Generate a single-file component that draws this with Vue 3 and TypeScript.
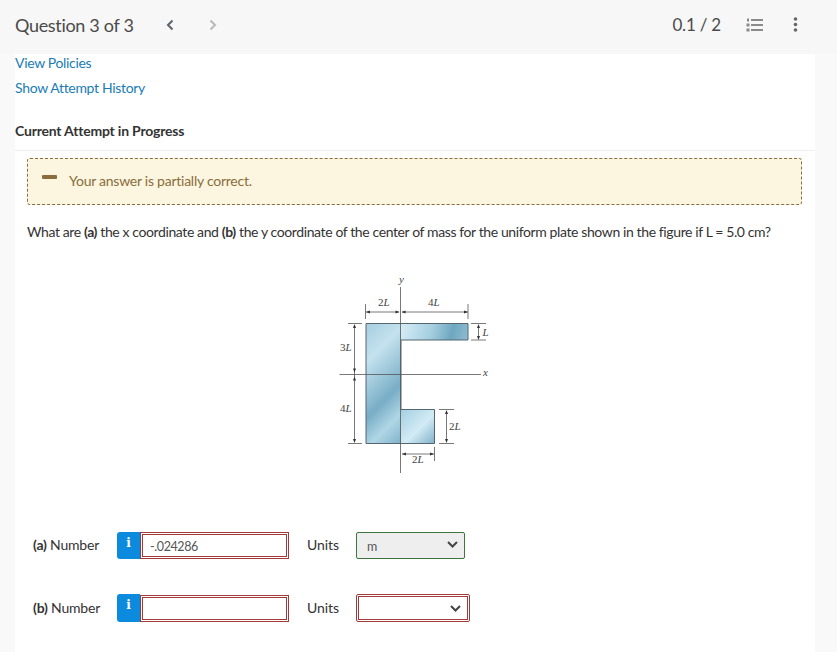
<script setup lang="ts">
interface AnswerRow {
  part: string
  value: string
  unit: string
}

const rows: AnswerRow[] = [
  { part: '(a)', value: '-.024286', unit: 'm' },
  { part: '(b)', value: '', unit: '' }
]
</script>

<template>
  <div class="page">
    <header class="top-bar">
      <h1 class="top-title">Question 3 of 3</h1>
      <svg class="nav-arrow prev" width="8" height="12" viewBox="0 0 8 12">
        <path d="M6.500 1.500 2 6l4.500 4.500" fill="none" stroke="#5f6368" stroke-width="2" />
      </svg>
      <svg class="nav-arrow next" width="8" height="12" viewBox="0 0 8 12">
        <path d="M1.500 1.500 6 6l-4.500 4.500" fill="none" stroke="#b9b9b9" stroke-width="2" />
      </svg>
      <span class="score">0.1 / 2</span>
      <svg class="list-icon" width="17" height="14" viewBox="0 0 17 14">
        <g fill="#8a8a8a">
          <rect x="5" y="1" width="12" height="2" />
          <rect x="5" y="6" width="12" height="2" />
          <rect x="5" y="11" width="12" height="2" />
          <rect x="1" y="0.500" width="2" height="3" />
          <rect x="0.500" y="5.500" width="3" height="3" />
          <rect x="0.500" y="10.500" width="3" height="3" />
        </g>
      </svg>
      <svg class="more-icon" width="5" height="15" viewBox="0 0 5 15">
        <g fill="#666">
          <circle cx="2.500" cy="2" r="1.800" />
          <circle cx="2.500" cy="7.500" r="1.800" />
          <circle cx="2.500" cy="13" r="1.800" />
        </g>
      </svg>
    </header>

    <main class="content">
      <a class="link">View Policies</a>
      <a class="link">Show Attempt History</a>
      <h2 class="attempt">Current Attempt in Progress</h2>

      <div class="alert">
        <span class="alert-dash"></span>
        <span class="alert-text">Your answer is partially correct.</span>
      </div>

      <p class="question">
        What are <b>(a)</b> the x coordinate and <b>(b)</b> the y coordinate of the center of mass for the uniform plate shown in the figure if L = 5.0 cm?
      </p>

      <svg class="figure" width="160" height="210" viewBox="330 270 160 210">
        <defs>
          <linearGradient id="plate" gradientUnits="userSpaceOnUse" x1="366" y1="323" x2="443.500" y2="400.500">
            <stop offset="0" stop-color="#a6cde0" />
            <stop offset="0.260" stop-color="#c4e2ee" />
            <stop offset="0.620" stop-color="#78adc6" />
            <stop offset="0.810" stop-color="#b0d6e6" />
            <stop offset="1" stop-color="#80b2ca" />
          </linearGradient>
          <linearGradient id="arm" gradientUnits="userSpaceOnUse" x1="401" y1="323" x2="468" y2="340">
            <stop offset="0" stop-color="#d6edf6" />
            <stop offset="0.450" stop-color="#a6cfe0" />
            <stop offset="0.750" stop-color="#6fa7c0" />
            <stop offset="1" stop-color="#8fbdd2" />
          </linearGradient>
          <linearGradient id="foot" x1="0" y1="0" x2="1" y2="1">
            <stop offset="0" stop-color="#a4cfe1" />
            <stop offset="0.550" stop-color="#d2ebf5" />
            <stop offset="1" stop-color="#7fb0c8" />
          </linearGradient>
        </defs>

        <rect x="366" y="323.500" width="35" height="120" fill="url(#plate)" />
        <rect x="401" y="323.500" width="67" height="16.500" fill="url(#arm)" />
        <rect x="401" y="409.500" width="34" height="34" fill="url(#foot)" />
        <path d="M366 323.500H468V340H401V409.500H434.500V443.500H366Z" fill="none" stroke="#55666f" stroke-width="1" />

        <g stroke="#555" stroke-width="0.800" fill="none">
          <path d="M400.500 287V473" />
          <path d="M339.500 374.500H481" />
          <path d="M348 323.500H362M348 443.500H362" />
          <path d="M471 323.500H486M471 340H486" />
          <path d="M365.500 304V319M468 304V319" />
          <path d="M434.500 447V461" />
          <path d="M439 409.500H454M439 443.500H454" />
          <path d="M366 312H399M402 312H468" />
          <path d="M354.500 325V442" />
          <path d="M478.500 325V339" />
          <path d="M446.500 411V442" />
          <path d="M402 454H434" />
        </g>
        <g fill="#333">
          <path d="M366 312l4-1.500v3zM399.500 312l-4-1.500v3zM401.500 312l4-1.500v3zM468 312l-4-1.500v3z" />
          <path d="M354.500 324l-1.500 4h3zM354.500 372.500l-1.500-4h3zM354.500 376.500l-1.500 4h3zM354.500 443l-1.500-4h3z" />
          <path d="M478.500 324l-1.500 4h3zM478.500 340l-1.500-4h3z" />
          <path d="M446.500 410l-1.500 4h3zM446.500 443l-1.500-4h3z" />
          <path d="M402 454l4-1.500v3zM434 454l-4-1.500v3z" />
        </g>
        <g class="fig-text">
          <text x="378" y="306">2<tspan font-style="italic">L</tspan></text>
          <text x="428" y="306">4<tspan font-style="italic">L</tspan></text>
          <text x="340" y="351">3<tspan font-style="italic">L</tspan></text>
          <text x="340" y="412">4<tspan font-style="italic">L</tspan></text>
          <text x="449" y="430">2<tspan font-style="italic">L</tspan></text>
          <text x="412" y="463">2<tspan font-style="italic">L</tspan></text>
          <text x="482.500" y="336" font-style="italic">L</text>
          <text x="399" y="283" font-size="9" font-style="italic">y</text>
          <text x="483" y="376" font-size="9" font-style="italic">x</text>
        </g>
      </svg>

      <div v-for="(row, i) in rows" :key="row.part" class="answer-row" :class="{ second: i === 1 }">
        <span class="answer-label"><b>{{ row.part }}</b> Number</span>
        <span class="info-btn">i</span>
        <input class="answer-input" :value="row.value" />
        <span class="units-label">Units</span>
        <div class="unit-select" :class="row.unit ? 'ok' : 'bad'">
          <span>{{ row.unit }}</span>
          <svg width="11" height="7" viewBox="0 0 11 7">
            <path d="M1 1l4.500 4.500L10 1" fill="none" stroke="#444" stroke-width="2" />
          </svg>
        </div>
      </div>
    </main>
  </div>
</template>

<style>
html,
body {
  background: #f9f9f9;
}
</style>

<style scoped>
.page {
  width: 837px;
  height: 652px;
  overflow: hidden;
  font-family: Lato, "Liberation Sans", sans-serif;
  color: #333;
}

.top-bar {
  display: flex;
  align-items: center;
  box-sizing: border-box;
  height: 54px;
  padding: 0 0 5px 15px;
  background: #f7f7f7;
}

.top-title {
  margin: 0;
  width: 118px;
  font-size: 18px;
  font-weight: 400;
  letter-spacing: -0.32px;
  white-space: nowrap;
  color: #4a4a4a;
}

.prev {
  margin-left: 33px;
}

.next {
  margin-left: 35px;
}

.score {
  margin-left: auto;
  font-size: 17px;
  letter-spacing: -0.2px;
  color: #4a4a4a;
}

.list-icon {
  margin-left: 25px;
}

.more-icon {
  margin: 0 39px 0 30px;
}

.content {
  width: 800px;
  height: 598px;
  margin-left: 15px;
  background: #fff;
}

.link {
  display: block;
  margin-bottom: 8px;
  font-size: 14px;
  line-height: 17px;
  letter-spacing: -0.33px;
  color: #1a7cb5;
}

.attempt {
  margin: 26px 0 0;
  padding-bottom: 11px;
  border-bottom: 1px solid #eee;
  font-size: 14px;
  line-height: 17px;
  font-weight: 700;
  letter-spacing: -0.2px;
  color: #333;
}

.alert {
  display: flex;
  align-items: center;
  box-sizing: border-box;
  width: 775px;
  height: 47px;
  margin: 7px 0 0 12px;
  padding-left: 14px;
  border: 1px dashed #8a6d3b;
  border-radius: 3px;
  background: #fcf6e1;
  font-size: 14px;
  color: #8a6d3b;
}

.alert-dash {
  width: 15px;
  height: 4px;
  margin: -10px 12px 0 0;
  border-radius: 1px;
  background: #8a6d3b;
}

.alert-text {
  padding-bottom: 2px;
  letter-spacing: -0.25px;
}

.question {
  margin: 18px 0 0 12px;
  font-size: 14px;
  line-height: 18px;
  letter-spacing: -0.39px;
  white-space: nowrap;
  color: #333;
}

.figure {
  display: block;
  margin: 29px 0 0 315px;
}

.fig-text text {
  font-family: "Liberation Serif", serif;
  font-size: 11px;
  fill: #444;
}

.answer-row {
  display: flex;
  align-items: center;
  height: 27px;
  margin-top: 52px;
  padding-left: 18px;
  font-size: 14px;
}

.answer-row.second {
  height: 28px;
  margin-top: 35px;
}

.answer-label {
  width: 84px;
  padding-bottom: 2px;
  letter-spacing: -0.2px;
}

.info-btn {
  display: flex;
  align-items: center;
  justify-content: center;
  align-self: stretch;
  box-sizing: border-box;
  width: 23px;
  padding-bottom: 6px;
  border-radius: 3px 0 0 3px;
  background: #0c8ade;
  color: #fff;
  font-family: "DejaVu Serif", serif;
  font-size: 12px;
  font-weight: 700;
}

.answer-input {
  box-sizing: border-box;
  width: 149px;
  height: 27px;
  padding: 2px 7px 0;
  border: 3px double #a33a3a;
  outline: none;
  background: #fff;
  font-family: Lato, sans-serif;
  font-size: 12.500px;
  letter-spacing: -0.4px;
  color: #555;
}

.units-label {
  width: 49px;
  margin-left: 18px;
  padding-bottom: 2px;
  letter-spacing: -0.1px;
}

.unit-select {
  display: flex;
  align-items: center;
  justify-content: space-between;
  box-sizing: border-box;
  height: 27px;
  padding: 0 6px 0 10px;
  border-radius: 2px;
  font-size: 12.500px;
  color: #555;
}

.unit-select.ok {
  width: 109px;
  border: 1px solid #3c763d;
  background: #eee;
}

.unit-select.ok span {
  padding-top: 2px;
}

.unit-select.ok svg {
  margin-bottom: 2px;
}

.unit-select.bad {
  width: 114px;
  height: 28px;
  border: 3px double #a33a3a;
  background: #fff;
}
</style>
